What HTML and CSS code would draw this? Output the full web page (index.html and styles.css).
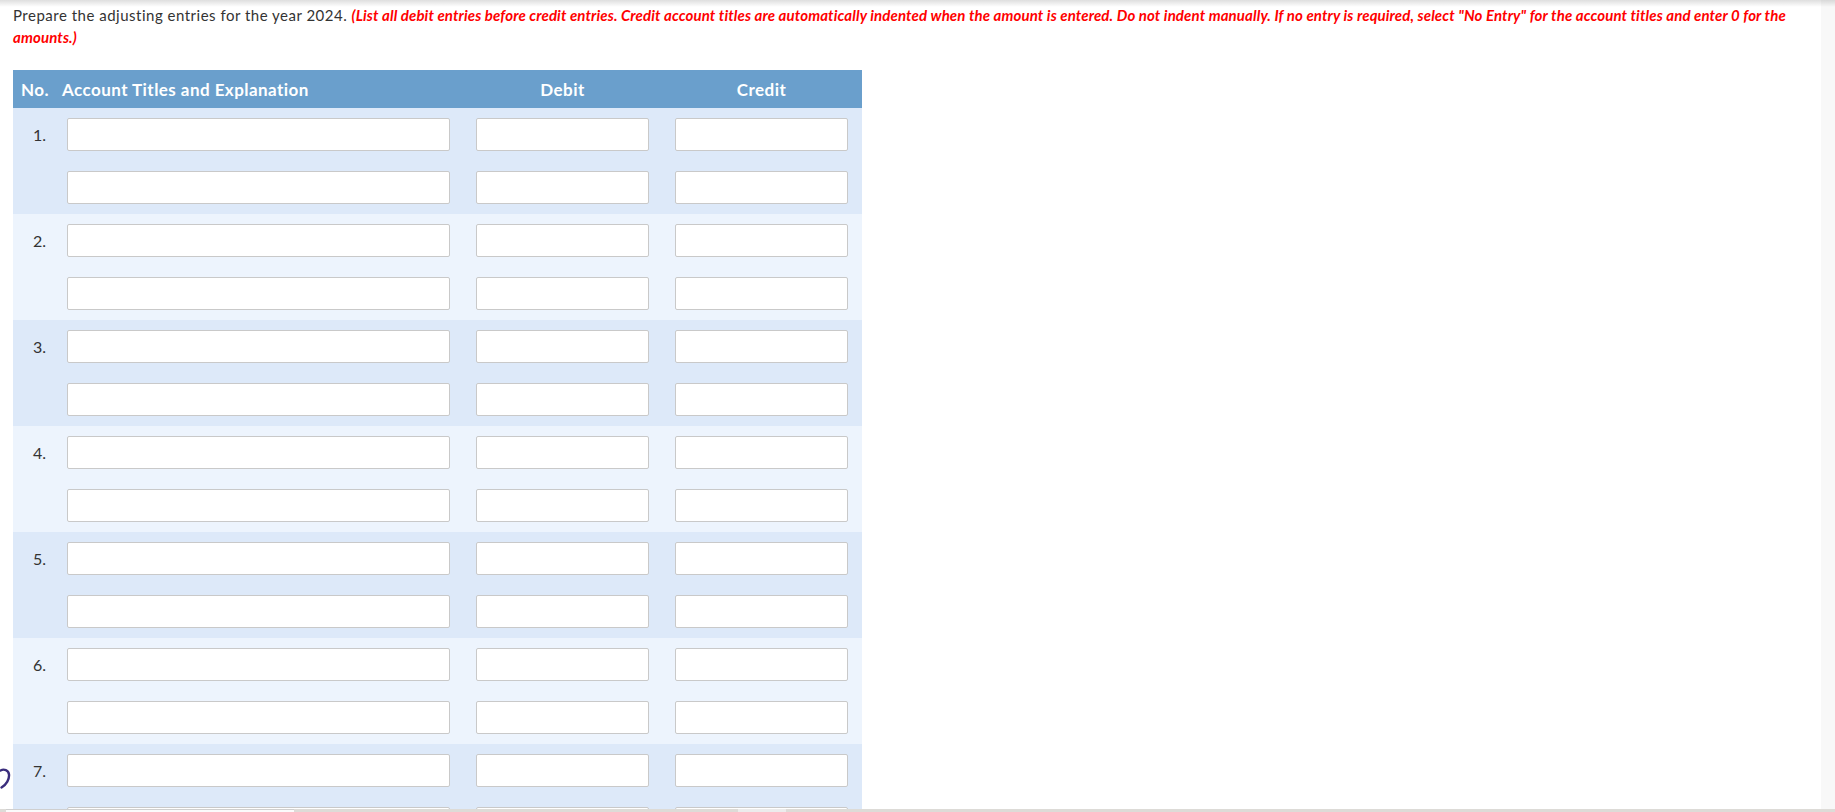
FILE: index.html
```html
<!DOCTYPE html>
<html lang="en">
<head>
<meta charset="utf-8">
<title>Adjusting entries</title>
<link rel="stylesheet" href="styles.css">
</head>
<body>
<div class="viewport">
  <div class="main">
    <div class="content">
      <p class="instructions">Prepare the adjusting entries for the year 2024. <em class="note">(List all debit entries before credit entries. Credit account titles are automatically indented when the amount is entered. Do not indent manually. If no entry is required, select "No Entry" for the account titles and enter 0 for the amounts.)</em></p>
      <div class="journal">
        <div class="journal-head">
          <span class="h-no">No.</span>
          <span class="h-acct">Account Titles and Explanation</span>
          <span class="h-amt">Debit</span>
          <span class="h-amt">Credit</span>
        </div>
        <div class="entry odd">
          <div class="line"><span class="num">1.</span><input class="field" type="text"><input class="field" type="text"><input class="field" type="text"></div>
          <div class="line"><span class="num"></span><input class="field" type="text"><input class="field" type="text"><input class="field" type="text"></div>
        </div>
        <div class="entry even">
          <div class="line"><span class="num">2.</span><input class="field" type="text"><input class="field" type="text"><input class="field" type="text"></div>
          <div class="line"><span class="num"></span><input class="field" type="text"><input class="field" type="text"><input class="field" type="text"></div>
        </div>
        <div class="entry odd">
          <div class="line"><span class="num">3.</span><input class="field" type="text"><input class="field" type="text"><input class="field" type="text"></div>
          <div class="line"><span class="num"></span><input class="field" type="text"><input class="field" type="text"><input class="field" type="text"></div>
        </div>
        <div class="entry even">
          <div class="line"><span class="num">4.</span><input class="field" type="text"><input class="field" type="text"><input class="field" type="text"></div>
          <div class="line"><span class="num"></span><input class="field" type="text"><input class="field" type="text"><input class="field" type="text"></div>
        </div>
        <div class="entry odd">
          <div class="line"><span class="num">5.</span><input class="field" type="text"><input class="field" type="text"><input class="field" type="text"></div>
          <div class="line"><span class="num"></span><input class="field" type="text"><input class="field" type="text"><input class="field" type="text"></div>
        </div>
        <div class="entry even">
          <div class="line"><span class="num">6.</span><input class="field" type="text"><input class="field" type="text"><input class="field" type="text"></div>
          <div class="line"><span class="num"></span><input class="field" type="text"><input class="field" type="text"><input class="field" type="text"></div>
        </div>
        <div class="entry odd">
          <div class="line"><span class="num">7.</span><input class="field" type="text"><input class="field" type="text"><input class="field" type="text"></div>
          <div class="line"><span class="num"></span><input class="field" type="text"><input class="field" type="text"><input class="field" type="text"></div>
        </div>
      </div>
    </div>
    <div class="vscroll"></div>
  </div>
  <div class="hscroll">
    <div class="hthumb"></div>
    <div class="hspacer"></div>
    <div class="hlight"></div>
  </div>
  <div class="top-shadow"></div>
  <svg class="pen-mark" width="12" height="26" viewBox="0 0 12 26" aria-hidden="true">
    <path d="M0.5 3.5 C4 1.5 8.5 3 9 7.5 C9.5 12 6.5 17.5 1.5 20.5" fill="none" stroke="#3a2d7c" stroke-width="2.4" stroke-linecap="round"/>
  </svg>
</div>
</body>
</html>
```

FILE: styles.css
```css
* {
  box-sizing: border-box;
}

html, body {
  margin: 0;
  padding: 0;
  background: #ffffff;
}

body {
  font-family: Lato, "Open Sans", "Liberation Sans", sans-serif;
  color: #333333;
}

.viewport {
  position: relative;
  height: 100vh;
  display: flex;
  flex-direction: column;
  overflow: hidden;
}

.main {
  flex: 1;
  min-height: 0;
  display: flex;
}

.content {
  flex: 1;
  min-width: 0;
  overflow: hidden;
  padding: 4px 10px 0 13px;
}

.vscroll {
  width: 14px;
  background: #f8f8f8;
}

.hscroll {
  height: 3px;
  display: flex;
  background: #dddbd7;
}

.hthumb {
  width: 288px;
  margin-left: 6px;
  background: #fbfbfb;
  border-top: 1px solid #cfcfcf;
}

.hspacer {
  width: 444px;
}

.hlight {
  width: 48px;
  background: #ececec;
}

.top-shadow {
  position: absolute;
  left: 0;
  right: 0;
  top: 0;
  height: 7px;
  background: linear-gradient(to bottom, rgba(0, 0, 0, 0.13), rgba(0, 0, 0, 0));
  pointer-events: none;
}

.pen-mark {
  position: absolute;
  left: 0;
  top: 767px;
}

.instructions {
  margin: 0;
  font-size: 15px;
  line-height: 22px;
  letter-spacing: 0.5px;
  color: #333333;
}

.note {
  color: #ff0000;
  font-weight: 700;
  font-style: italic;
  letter-spacing: 0.12px;
}

.journal {
  width: 849px;
  margin-top: 22px;
}

.journal-head,
.line {
  display: grid;
  grid-template-columns: 28px 383px 173px 173px;
  column-gap: 26px;
  align-items: center;
}

.journal-head {
  height: 38px;
  background: #6a9fcc;
  color: #ffffff;
  font-weight: 700;
  font-size: 17px;
  letter-spacing: 0.45px;
}

.h-no {
  padding-left: 8px;
  white-space: nowrap;
}

.h-acct {
  margin-left: -5px;
  white-space: nowrap;
}

.h-amt {
  text-align: center;
}

.entry.odd {
  background: #dde9f9;
}

.entry.even {
  background: #edf4fd;
}

.line {
  height: 53px;
}

.num {
  padding-left: 20px;
  font-size: 16px;
  white-space: nowrap;
  color: #333333;
}

.field {
  display: block;
  width: 100%;
  height: 33px;
  margin: 0;
  padding: 0 6px;
  border: 1px solid #c9c9c9;
  border-radius: 2px;
  background: #ffffff;
  font-family: inherit;
  font-size: 15px;
}
```
